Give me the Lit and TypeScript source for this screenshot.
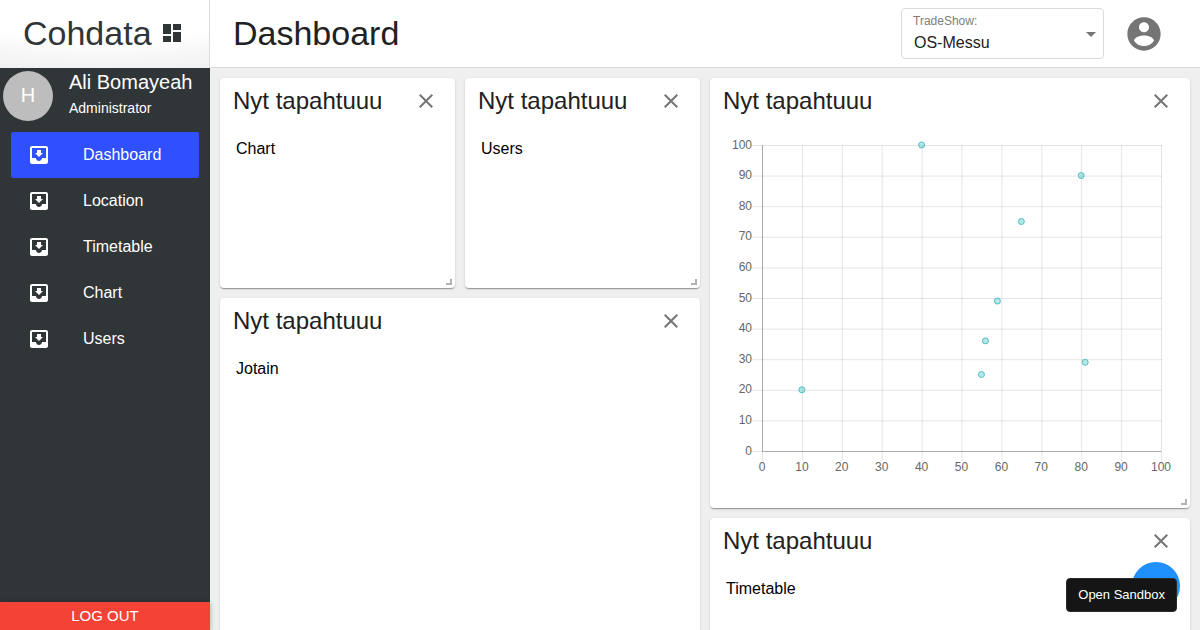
import { LitElement, html, svg, css } from "lit";
import { customElement, property, state } from "lit/decorators.js";

const ICONS = {
  dashboard: "M3 13h8V3H3v10zm0 8h8v-6H3v6zm10 0h8V11h-8v10zm0-18v6h8V3h-8z",
  inbox:
    "M19 3H4.990c-1.110 0-1.980.9-1.980 2L3 19c0 1.100.88 2 1.990 2H19c1.100 0 2-.9 2-2V5c0-1.100-.9-2-2-2zm0 12h-4c0 1.660-1.350 3-3 3s-3-1.340-3-3H4.990V5H19v10zm-3-5h-2V7h-4v3H8l4 4 4-4z",
  close:
    "M19 6.410L17.590 5 12 10.590 6.410 5 5 6.410 10.590 12 5 17.590 6.410 19 12 13.410 17.590 19 19 17.590 13.410 12z",
  account:
    "M12 2C6.480 2 2 6.480 2 12s4.480 10 10 10 10-4.480 10-10S17.520 2 12 2zm0 3c1.660 0 3 1.340 3 3s-1.340 3-3 3-3-1.340-3-3 1.340-3 3-3zm0 14.200c-2.500 0-4.710-1.280-6-3.220.03-1.990 4-3.080 6-3.080 1.990 0 5.970 1.090 6 3.080-1.290 1.940-3.500 3.220-6 3.220z",
  dropdown: "M7 10l5 5 5-5z",
};

const icon = (name: keyof typeof ICONS) =>
  html`<svg class="icon" viewBox="0 0 24 24" aria-hidden="true"><path d=${ICONS[name]} /></svg>`;

@customElement("scatter-chart")
class ScatterChart extends LitElement {
  @property({ attribute: false }) points: [number, number][] = [];

  static styles = css`
    :host {
      display: block;
    }
    svg {
      display: block;
      width: 100%;
      overflow: visible;
    }
    .grid {
      stroke: rgba(0, 0, 0, 0.1);
    }
    .axis {
      stroke: rgba(0, 0, 0, 0.25);
    }
    text {
      font: 12px "Liberation Sans", Arial, sans-serif;
      fill: #666;
    }
    .y-label {
      text-anchor: end;
    }
    .x-label {
      text-anchor: middle;
    }
    .point {
      fill: rgba(75, 192, 192, 0.4);
      stroke: rgb(75, 192, 200);
    }
  `;

  render() {
    const left = 36;
    const top = 12;
    const width = 399;
    const height = 306;
    const px = (v: number) => left + (v / 100) * width;
    const py = (v: number) => top + height - (v / 100) * height;
    const ticks = Array.from({ length: 11 }, (_, i) => i * 10);
    return html`<svg viewBox="0 0 448 340" role="img" aria-label="Scatter chart">
      ${ticks.map(
        (t) => svg`
          <line class="grid" x1=${px(t) + 0.5} x2=${px(t) + 0.5} y1=${top} y2=${top + height + 10} />
          <line class="grid" y1=${py(t) + 0.5} y2=${py(t) + 0.5} x1=${left - 10} x2=${left + width + 1} />
          <text class="y-label" x=${left - 10} y=${Math.floor(py(t)) + 4}>${t}</text>
          <text class="x-label" x=${px(t)} y=${top + height + 20}>${t}</text>`
      )}
      <line class="axis" x1=${left + 0.5} x2=${left + 0.5} y1=${top} y2=${top + height} />
      <line class="axis" x1=${left} x2=${left + width} y1=${top + height + 0.5} y2=${top + height + 0.5} />
      ${this.points.map(([x, y]) => svg`<circle class="point" cx=${px(x)} cy=${py(y)} r="3" />`)}
    </svg>`;
  }
}

@customElement("dash-card")
class DashCard extends LitElement {
  @property() heading = "";

  static styles = css`
    :host {
      display: flex;
      flex-direction: column;
      position: relative;
      background: #fff;
      border-radius: 4px;
      box-shadow: 0 2px 1px -1px rgba(0, 0, 0, 0.2), 0 1px 1px rgba(0, 0, 0, 0.14),
        0 1px 3px rgba(0, 0, 0, 0.12);
    }
    header {
      display: flex;
      align-items: center;
      justify-content: space-between;
      height: 46px;
      padding: 0 17px 0 13px;
    }
    h2 {
      margin: 0;
      font-size: 24px;
      line-height: 32px;
      font-weight: 400;
      color: #212121;
    }
    button {
      display: flex;
      padding: 0;
      border: 0;
      background: none;
      color: #757575;
      cursor: pointer;
    }
    .icon {
      width: 24px;
      height: 24px;
      fill: currentColor;
    }
    .body {
      flex: 1;
      padding: 9px 16px;
      font-size: 16px;
      line-height: 32px;
      color: #000;
    }
    .handle {
      position: absolute;
      right: 3px;
      bottom: 3px;
      width: 4px;
      height: 4px;
      border-right: 2px solid rgba(0, 0, 0, 0.3);
      border-bottom: 2px solid rgba(0, 0, 0, 0.3);
    }
  `;

  render() {
    return html`<header>
        <h2>${this.heading}</h2>
        <button aria-label="Close" @click=${() => this.remove()}>${icon("close")}</button>
      </header>
      <div class="body"><slot></slot></div>
      <span class="handle"></span>`;
  }
}

@customElement("app-root")
class AppRoot extends LitElement {
  @state() private active = "Dashboard";

  private readonly pages = ["Dashboard", "Location", "Timetable", "Chart", "Users"];

  private readonly points: [number, number][] = [
    [10, 20],
    [40, 100],
    [55, 25],
    [56, 36],
    [59, 49],
    [65, 75],
    [80, 90],
    [81, 29],
  ];

  static styles = css`
    :host {
      display: grid;
      grid-template-columns: 210px minmax(0, 1fr);
      height: 100vh;
      overflow: hidden;
      font-family: "Liberation Sans", Arial, sans-serif;
      background: #efefef;
    }
    .icon {
      width: 24px;
      height: 24px;
      fill: currentColor;
    }
    .sidebar {
      display: flex;
      flex-direction: column;
      min-height: 0;
      background: #303538;
      color: #fff;
    }
    .brand {
      display: flex;
      align-items: center;
      gap: 8px;
      box-sizing: border-box;
      height: 68px;
      padding: 0 24px 2px 23px;
      border-right: 1px solid #dcdcdc;
      background: radial-gradient(ellipse 140% 115% at 50% 0, #fff 50%, #eee 100%);
      color: #303538;
      font-size: 34px;
      line-height: 40px;
    }
    .user {
      display: flex;
      align-items: center;
      gap: 16px;
      box-sizing: border-box;
      height: 56px;
      padding: 0 3px;
      border-bottom: 1px solid #2d3235;
    }
    .avatar {
      display: flex;
      flex: none;
      align-items: center;
      justify-content: center;
      width: 50px;
      height: 50px;
      border-radius: 50%;
      background: #bdbdbd;
      font-size: 20px;
    }
    .identity {
      padding-bottom: 4px;
    }
    .name {
      font-size: 20px;
      line-height: 28px;
      white-space: nowrap;
    }
    .role {
      font-size: 14px;
      line-height: 24px;
    }
    nav {
      display: flex;
      flex: 1;
      flex-direction: column;
      padding: 8px 11px;
    }
    nav a {
      display: flex;
      align-items: center;
      gap: 32px;
      height: 46px;
      padding: 0 16px;
      border-radius: 2px;
      color: inherit;
      font-size: 16px;
      text-decoration: none;
    }
    nav a[aria-current="page"] {
      background: #304ffe;
    }
    .logout {
      height: 28px;
      padding: 0 0 2px;
      border: 0;
      background: #f44336;
      box-shadow: 0 1px 5px rgba(0, 0, 0, 0.3);
      color: #fff;
      font: 15px "Liberation Sans", Arial, sans-serif;
      text-transform: uppercase;
      cursor: pointer;
    }
    .main {
      display: flex;
      flex-direction: column;
      min-height: 0;
    }
    .topbar {
      display: flex;
      flex: none;
      align-items: center;
      box-sizing: border-box;
      height: 68px;
      padding: 0 36px 0 23px;
      border-bottom: 1px solid #dcdcdc;
      background: #fff;
    }
    h1 {
      flex: 1;
      margin: 0;
      padding-bottom: 2px;
      color: #212121;
      font-size: 34px;
      line-height: 40px;
      font-weight: 400;
    }
    .field {
      display: grid;
      grid-template-columns: 1fr 24px;
      align-items: center;
      box-sizing: border-box;
      width: 203px;
      height: 51px;
      border: 1px solid #dcdcdc;
      border-radius: 4px;
      color: #757575;
    }
    .field label,
    .field select,
    .field .icon {
      grid-column: 1 / -1;
      grid-row: 1;
    }
    .field label {
      align-self: start;
      padding: 4px 11px;
      color: #7c7f76;
      font-size: 12px;
      line-height: 16px;
      pointer-events: none;
      z-index: 1;
    }
    .field select {
      width: 100%;
      height: 49px;
      padding: 20px 12px 2px;
      border: 0;
      appearance: none;
      background: none;
      color: #212121;
      font: 16px "Liberation Sans", Arial, sans-serif;
    }
    .field .icon {
      grid-column: 2;
      pointer-events: none;
    }
    .account {
      display: flex;
      margin-left: 20px;
      padding: 0;
      border: 0;
      background: none;
      color: #757575;
      cursor: pointer;
    }
    .account .icon {
      width: 40px;
      height: 40px;
    }
    .board {
      display: grid;
      flex: 1;
      grid-template-columns: repeat(4, minmax(0, 1fr));
      grid-auto-rows: 210px;
      gap: 10px;
      min-height: 0;
      padding: 10px;
      overflow: hidden;
    }
    .wide {
      grid-column: span 2;
      grid-row: span 2;
    }
    .fab {
      position: fixed;
      right: 20px;
      bottom: 20px;
      width: 48px;
      height: 48px;
      border: 0;
      border-radius: 50%;
      background: #1e90ff;
    }
    .tooltip {
      position: fixed;
      right: 23px;
      bottom: 18px;
      padding: 8px 11px;
      border: 1px solid #2b2b2b;
      border-radius: 4px;
      background: #151515;
      color: #fff;
      font-size: 13px;
      line-height: 16px;
      text-decoration: none;
    }
  `;

  render() {
    return html`
      <aside class="sidebar">
        <div class="brand"><span>Cohdata</span>${icon("dashboard")}</div>
        <div class="user">
          <span class="avatar">H</span>
          <div class="identity">
            <div class="name">Ali Bomayeah</div>
            <div class="role">Administrator</div>
          </div>
        </div>
        <nav>
          ${this.pages.map(
            (page) => html`<a
              href="#${page.toLowerCase()}"
              aria-current=${page === this.active ? "page" : "false"}
              @click=${() => (this.active = page)}
              >${icon("inbox")}<span>${page}</span></a
            >`
          )}
        </nav>
        <button class="logout">Log out</button>
      </aside>
      <div class="main">
        <header class="topbar">
          <h1>${this.active}</h1>
          <div class="field">
            <label for="tradeshow">TradeShow:</label>
            <select id="tradeshow">
              <option>OS-Messu</option>
            </select>
            ${icon("dropdown")}
          </div>
          <button class="account" aria-label="Account">${icon("account")}</button>
        </header>
        <main class="board">
          <dash-card heading="Nyt tapahtuuu">Chart</dash-card>
          <dash-card heading="Nyt tapahtuuu">Users</dash-card>
          <dash-card class="wide" heading="Nyt tapahtuuu">
            <scatter-chart .points=${this.points}></scatter-chart>
          </dash-card>
          <dash-card class="wide" heading="Nyt tapahtuuu">Jotain</dash-card>
          <dash-card class="wide" heading="Nyt tapahtuuu">Timetable</dash-card>
        </main>
      </div>
      <button class="fab" aria-label="Add"></button>
      <a class="tooltip" href="#sandbox">Open Sandbox</a>
    `;
  }
}
